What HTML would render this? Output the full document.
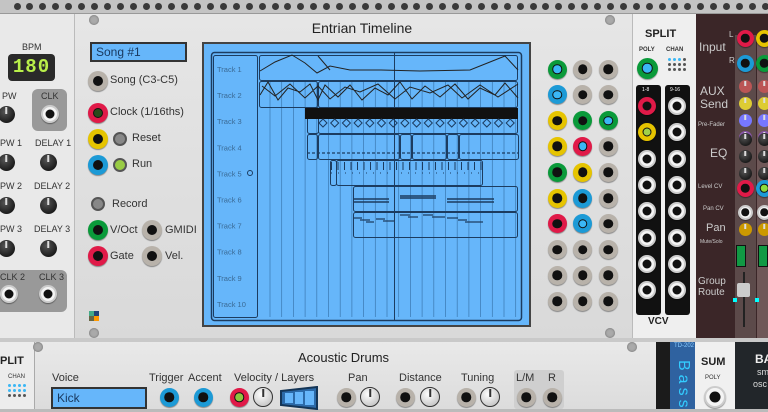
<!DOCTYPE html>
<html><head><meta charset="utf-8">
<style>
*{margin:0;padding:0;box-sizing:border-box}
body{width:768px;height:409px;overflow:hidden;position:relative;background:#bbb;font-family:"Liberation Sans",sans-serif}
.a{position:absolute}
.t{position:absolute;white-space:nowrap;color:#333}
.j{position:absolute;border-radius:50%}
.j i{position:absolute;border-radius:50%;background:#111;left:50%;top:50%;transform:translate(-50%,-50%)}
.k{position:absolute;border-radius:50%;background:radial-gradient(circle at 40% 35%,#555,#1c1c1c 70%);}
.k:after{content:"";position:absolute;left:50%;top:8%;width:1.5px;height:40%;background:#ddd;transform:translateX(-50%)}
.kw{border:1.5px solid #333}
.kw:after{background:#333}
.dot{position:absolute;width:7px;height:7px;border-radius:50%;background:#3a3a3a;top:3px}
</style></head><body>
<div class="a" style="left:0;top:0;width:768px;height:14px;background:#c4c4c4;border-bottom:1px solid #999" id="rail"></div>
<div class="a" style="left:0;top:14px;width:75px;height:324px;background:#e9e9e9;border-right:1px solid #bbb"></div>
<div class="a" style="left:75px;top:14px;width:557px;height:324px;background:linear-gradient(180deg,#e6e6e6,#d9d9d9)"></div>
<div class="a" style="left:632px;top:14px;width:64px;height:324px;background:#efefef;border-left:1px solid #bbb"></div>
<div class="a" style="left:696px;top:14px;width:72px;height:324px;background:#3b2628"></div>
<div class="a" style="left:735px;top:35px;width:21px;height:303px;background:#5c4a4a"></div>
<div class="a" style="left:757px;top:35px;width:11px;height:303px;background:#6f5858"></div>
<div class="a" style="left:0;top:338px;width:768px;height:4px;background:#c9c9c9"></div>
<div class="a" style="left:0;top:342px;width:35px;height:67px;background:#ececec;border-right:1px solid #aaa"></div>
<div class="a" style="left:35px;top:342px;width:621px;height:67px;background:linear-gradient(180deg,#e9e9e9,#dcdcdc)"></div>
<div class="a" style="left:656px;top:342px;width:14px;height:67px;background:#1b1b1b"></div>
<div class="a" style="left:670px;top:342px;width:25px;height:67px;background:#2f62a0"></div>
<div class="a" style="left:695px;top:342px;width:40px;height:67px;background:#f0f0f0"></div>
<div class="a" style="left:735px;top:342px;width:33px;height:67px;background:#22262a"></div>

<div class="t" style="left:272px;top:20px;font-size:14px;color:#222;width:180px;text-align:center">Entrian Timeline</div>

<div class="t" style="left:22px;top:42px;font-size:9px">BPM</div>
<div class="a" style="left:8px;top:54px;width:47px;height:27px;background:#2a2a2a;border-radius:4px;color:#b9f04a;font:bold 19px 'Liberation Mono',monospace;text-align:center;line-height:27px;letter-spacing:1px">180</div>
<div class="a" style="left:32px;top:89px;width:35px;height:42px;background:#999;border-radius:6px"></div>
<div class="t" style="left:41px;top:91px;font-size:9px">CLK</div>
<div class="t" style="left:2px;top:91px;font-size:9px">PW</div>
<div class="t" style="left:0px;top:138px;font-size:9px">PW 1</div>
<div class="t" style="left:35px;top:138px;font-size:9px">DELAY 1</div>
<div class="t" style="left:0px;top:181px;font-size:9px">PW 2</div>
<div class="t" style="left:34px;top:181px;font-size:9px">DELAY 2</div>
<div class="t" style="left:0px;top:224px;font-size:9px">PW 3</div>
<div class="t" style="left:34px;top:224px;font-size:9px">DELAY 3</div>
<div class="a" style="left:0;top:270px;width:67px;height:42px;background:#999;border-radius:0 6px 6px 0"></div>
<div class="t" style="left:0px;top:272px;font-size:9px">CLK 2</div>
<div class="t" style="left:39px;top:272px;font-size:9px">CLK 3</div>

<div class="a" style="left:90px;top:42px;width:97px;height:20px;background:#66b6fa;border:2px solid #333;font:12px 'Liberation Sans';color:#1a3a60;padding-left:4px;line-height:16px">Song #1</div>
<div class="t" style="left:110px;top:74px;font-size:11px">Song (C3-C5)</div>
<div class="t" style="left:110px;top:106px;font-size:11px">Clock (1/16ths)</div>
<div class="t" style="left:132px;top:132px;font-size:11px">Reset</div>
<div class="t" style="left:132px;top:158px;font-size:11px">Run</div>
<div class="t" style="left:112px;top:198px;font-size:11px">Record</div>
<div class="t" style="left:110px;top:224px;font-size:11px">V/Oct</div>
<div class="t" style="left:165px;top:224px;font-size:11px">GMIDI</div>
<div class="t" style="left:110px;top:250px;font-size:11px">Gate</div>
<div class="t" style="left:165px;top:250px;font-size:11px">Vel.</div>
<div class="a" style="left:89px;top:311px;width:5px;height:5px;background:#4a8"></div>
<div class="a" style="left:94px;top:311px;width:5px;height:5px;background:#247"></div>
<div class="a" style="left:94px;top:316px;width:5px;height:5px;background:#f90"></div>
<div class="a" style="left:89px;top:316px;width:5px;height:5px;background:#664"></div>

<div class="a" style="left:202px;top:42px;width:329px;height:285px;background:#66b6fa;border:2px solid #444"></div>
<svg class="a" style="left:0;top:0" width="768" height="409">
<g fill="none" stroke="#1c3c60" stroke-width="1">
<rect x="211.5" y="52.5" width="310" height="268" rx="3" stroke-width="1.5"/>
<rect x="213.5" y="55.5" width="44" height="262" rx="2"/>
<g stroke="#3a78b0" stroke-width="0.7" id="grid"></g>
<line x1="394.5" y1="53" x2="394.5" y2="320" stroke="#1c3c60"/>
<rect x="259.5" y="55.5" width="258" height="25" rx="2"/>
<path d="M260 71 L275 62 L292 55 L305 63 L317 73 L330 66 L350 70 L380 70 L420 71 L470 70 L490 62 L505 56 L518 70" stroke="#222"/>
<path d="M318 56 L330 70" stroke="#222"/>
<rect x="259.5" y="81.5" width="58" height="26" rx="2"/><rect x="318.5" y="81.5" width="199" height="26" rx="2"/>
<path d="M260 95 L268 82 L278 100 L288 88 L300 92 L310 84 L318 100 L325 85 L338 97 L350 85 L362 100 L375 88 L388 95 L400 82 L412 99 L425 86 L440 97 L455 84 L468 99 L480 88 L495 95 L505 83 L518 98 M262 86 L275 96 L290 84 L305 98 L318 86 L330 99 L345 87 L360 92 L378 84 L395 99 L410 87 L430 93 L448 85 L462 98 L480 85 L498 97 L518 84" stroke="#222"/>
<rect x="307.5" y="107.5" width="11" height="26" rx="2"/><rect x="318.5" y="107.5" width="199" height="26" rx="2"/>
<rect x="305" y="108" width="213" height="11" fill="#111" stroke="none"/>
<g id="dia" stroke="#1c3c60"></g>
<rect x="307.5" y="134.5" width="10" height="25" rx="2"/><rect x="318.5" y="134.5" width="81" height="25" rx="2"/><rect x="400.5" y="134.5" width="11" height="25" rx="2"/><rect x="412.5" y="134.5" width="34" height="25" rx="2"/><rect x="447.5" y="134.5" width="11" height="25" rx="2"/><rect x="459.5" y="134.5" width="59" height="25" rx="2"/>
<path d="M307 153 H518" stroke="#1c3c60" stroke-dasharray="3 2" stroke-width="1.2"/>
<rect x="330.5" y="160.5" width="6" height="25" rx="2"/><rect x="336.5" y="160.5" width="146" height="25" rx="2"/>
<path d="M331 166 H483" stroke="#1c3c60" stroke-dasharray="1 5.5" stroke-width="8"/>
<path d="M331 173 H483" stroke="#1c3c60" stroke-dasharray="1 6"/>
<rect x="353.5" y="186.5" width="164" height="25" rx="2"/>
<path d="M353 199 H389 M353 202 H389 M400 196 H436 M400 198 H436 M447 199 H494 M447 202 H494" stroke="#1c3c60" stroke-width="1.5"/>
<rect x="353.5" y="212.5" width="164" height="25" rx="2"/>
<path d="M353 218 H362 M360 220 H370 M366 222 H374 M376 219 H385 M383 221 H395 M400 215 H410 M408 217 H418 M423 215 H433 M432 217 H445 M447 218 H458 M458 220 H467 M465 222 H483" stroke="#1c3c60" stroke-width="1.3"/>
<circle cx="250" cy="173" r="2.5" stroke="#1c3c60"/>
</g>
<g font-family="Liberation Sans" font-size="7.5" fill="#3a6a95" id="tl"></g>
</svg>

<div class="t" style="left:645px;top:28px;font-size:11px;font-weight:bold;color:#222">SPLIT</div>
<div class="t" style="left:639px;top:47px;font-size:6px;font-weight:bold">POLY</div>
<div class="t" style="left:666px;top:47px;font-size:6px;font-weight:bold">CHAN</div>
<div class="a" style="left:636px;top:85px;width:25px;height:230px;background:#111;border-radius:3px"></div>
<div class="a" style="left:665px;top:85px;width:25px;height:230px;background:#111;border-radius:3px"></div>
<div class="t" style="left:642px;top:87px;font-size:5px;color:#fff">1-8</div>
<div class="t" style="left:670px;top:87px;font-size:5px;color:#fff">9-16</div>
<div class="t" style="left:648px;top:316px;font-size:10px;font-weight:bold;color:#222">VCV</div>

<div class="t" style="left:699px;top:40px;font-size:12px;color:#ccc">Input</div>
<div class="t" style="left:729px;top:30px;font-size:8px;color:#ccc">L</div>
<div class="t" style="left:729px;top:56px;font-size:8px;color:#ccc">R</div>
<div class="t" style="left:700px;top:85px;font-size:12px;color:#ccc;line-height:13px">AUX<br>Send</div>
<div class="t" style="left:698px;top:122px;font-size:6px;color:#ccc">Pre-Fader</div>
<div class="t" style="left:710px;top:146px;font-size:12px;color:#ccc">EQ</div>
<div class="t" style="left:698px;top:184px;font-size:6px;color:#ccc">Level CV</div>
<div class="t" style="left:703px;top:206px;font-size:6px;color:#ccc">Pan CV</div>
<div class="t" style="left:706px;top:222px;font-size:11px;color:#ccc">Pan</div>
<div class="t" style="left:700px;top:239px;font-size:5px;color:#ccc">Mute/Solo</div>
<div class="t" style="left:698px;top:276px;font-size:10px;color:#ccc;line-height:11px">Group<br>Route</div>
<div class="a" style="left:736px;top:245px;width:10px;height:22px;background:#194;border:1px solid #111"></div>
<div class="a" style="left:758px;top:245px;width:10px;height:22px;background:#194;border:1px solid #111"></div>
<div class="a" style="left:743px;top:272px;width:2px;height:55px;background:#222"></div>
<div class="a" style="left:737px;top:283px;width:13px;height:14px;background:#ccc;border-radius:2px"></div>
<div class="a" style="left:733px;top:298px;width:4px;height:4px;background:#0ff"></div>
<div class="a" style="left:755px;top:298px;width:4px;height:4px;background:#0ff"></div>

<div class="t" style="left:0px;top:355px;font-size:11px;font-weight:bold;color:#222">PLIT</div>
<div class="t" style="left:8px;top:374px;font-size:6px">CHAN</div>
<div class="t" style="left:298px;top:350px;font-size:13px;color:#222">Acoustic Drums</div>
<div class="t" style="left:52px;top:372px;font-size:11px">Voice</div>
<div class="t" style="left:149px;top:372px;font-size:11px">Trigger</div>
<div class="t" style="left:188px;top:372px;font-size:11px">Accent</div>
<div class="t" style="left:234px;top:372px;font-size:11px">Velocity / Layers</div>
<div class="t" style="left:348px;top:372px;font-size:11px">Pan</div>
<div class="t" style="left:399px;top:372px;font-size:11px">Distance</div>
<div class="t" style="left:461px;top:372px;font-size:11px">Tuning</div>
<div class="a" style="left:514px;top:370px;width:50px;height:39px;background:#cfcfcf;border-radius:3px"></div>
<div class="t" style="left:516px;top:372px;font-size:11px">L/M</div>
<div class="t" style="left:548px;top:372px;font-size:11px">R</div>
<div class="a" style="left:51px;top:387px;width:96px;height:22px;background:#66b6fa;border:2px solid #333;font-size:12px;color:#1a3a60;padding-left:4px;line-height:18px">Kick</div>
<svg class="a" style="left:280px;top:386px" width="40" height="24"><path d="M1 5 L37 1 L37 23 L1 19Z" fill="#2c6aa8" stroke="#143556" stroke-width="2"/><rect x="5" y="7" width="8" height="10" fill="#66b6fa"/><rect x="15" y="6" width="8" height="12" fill="#66b6fa"/><rect x="25" y="5" width="9" height="14" fill="#66b6fa"/></svg>
<div class="t" style="left:674px;top:343px;font-size:6px;color:#8cf">TD-202</div>
<div class="t" style="font-size:16px;color:#3cf;transform:rotate(90deg);transform-origin:left top;left:692px;top:360px;letter-spacing:4px">Bass</div>
<div class="t" style="left:701px;top:356px;font-size:11px;font-weight:bold;color:#222">SUM</div>
<div class="t" style="left:705px;top:375px;font-size:6px">POLY</div>
<div class="t" style="left:755px;top:352px;font-size:12px;font-weight:bold;color:#eee">BA</div>
<div class="t" style="left:757px;top:367px;font-size:9px;color:#ddd">sm</div>
<div class="t" style="left:753px;top:379px;font-size:9px;color:#ddd">osc</div>
<div id="z"></div>
<script>
var z=document.getElementById('z'),h='';
var r=document.getElementById('rail');
for(var x=17;x<768;x+=12.9)h+='<div class="dot" style="left:'+(x-3.5)+'px"></div>';
r.innerHTML=h;h='';
var C={g:['#b8b2aa','#111'],G:['#0a9a3a','#111'],Gb:['#0a9a3a','#3bb7f5'],B:['#1c9ad6','#111'],Bb:['#1c9ad6','#3bb7f5'],Y:['#e6c400','#111'],R:['#e01a48','#111'],Rb:['#e01a48','#3bb7f5'],Rg:['#e01a48','#2a4a1a'],W:['#f4f4f4','#111'],Yg:['#e6c400','#a0d04a'],Rl:['#e01a48','#8cc63f'],Bl:['#1c9ad6','#8cdc3c']};
function J(x,y,c,s){s=s||20;var q=C[c];h+='<div class="j" style="left:'+(x-s/2)+'px;top:'+(y-s/2)+'px;width:'+s+'px;height:'+s+'px;background:'+q[0]+';box-shadow:0 1px 1px rgba(0,0,0,.4)'+(c=='W'?';border:2px solid #ccc':'')+'"><i style="width:'+(s*.5)+'px;height:'+(s*.5)+'px;background:'+q[1]+';border:'+(q[1]!='#111'?'1.5px solid #111':'0')+'"></i></div>';}
function K(x,y,s,bg){h+='<div class="k'+(bg&&bg.indexOf('#fff')>0?' kw':'')+'" style="left:'+(x-s/2)+'px;top:'+(y-s/2)+'px;width:'+s+'px;height:'+s+'px'+(bg?';background:'+bg:'')+'"></div>';}
function B(x,y,c){h+='<div class="a" style="left:'+(x-7)+'px;top:'+(y-7)+'px;width:14px;height:14px;border-radius:50%;background:'+c+';border:2px solid #555"></div>';}
function S(x,y){h+='<div class="a" style="left:'+(x-5)+'px;top:'+(y-5)+'px;width:10px;height:10px;border-radius:50%;background:#aaa;box-shadow:inset 0 0 2px #666"></div>';}
J(50,114,'W',18);K(6,114,17);K(6,162,17);K(48,162,17);K(6,205,17);K(48,205,17);K(6,248,17);K(48,248,17);
J(9,294,'W',18);J(48,294,'W',18);
J(98,81,'g');J(98,113,'Rg');J(98,139,'Y');J(98,165,'B');B(120,139,'#888');B(120,165,'#9c4');B(98,204,'#888');
J(98,230,'G');J(98,256,'R');J(152,230,'g');J(152,256,'g');
var cols=[['Gb','g','g'],['Bb','g','g'],['Y','G','Gb'],['Y','Rb','g'],['G','Y','g'],['Y','B','g'],['R','Bb','g'],['g','g','g'],['g','g','g'],['g','g','g']];
for(var i=0;i<10;i++)for(var k=0;k<3;k++)J(557+k*25.5,69+i*25.8,cols[i][k],19);
S(94,20);S(94,333);S(610,20);S(610,333);S(38,347);S(632,347);
J(647,68,'Gb',21);
for(var a=0;a<3;a++)for(var b=0;b<4;b++)h+='<div class="a" style="left:'+(668+b*5)+'px;top:'+(58+a*5)+'px;width:3px;height:3px;border-radius:50%;background:'+(a==0&&b<3?'#3bb7f5':'#555')+'"></div>';
for(var a=0;a<3;a++)for(var b=0;b<4;b++)h+='<div class="a" style="left:'+(8+b*5)+'px;top:'+(384+a*5)+'px;width:3px;height:3px;border-radius:50%;background:'+(a<2?'#3bb7f5':'#555')+'"></div>';
for(var i=0;i<8;i++){J(647,106+i*26.3,i==0?'R':i==1?'Yg':'W',18);J(677,106+i*26.3,'W',18);}
J(745,38,'R',17);J(764,38,'Y',17);J(745,63,'B',17);J(764,63,'G',17);
var kc=['#b55','#dc3','#77f','#85a'];for(var i=0;i<4;i++){K(745,86+i*17,13,kc[i]);K(764,86+i*17,13,kc[i]);}
for(var i=0;i<3;i++){K(745,139+i*17,13);K(764,139+i*17,13);}
J(745,188,'R',17);J(764,188,'Bl',17);J(745,212,'W',15);J(764,212,'W',15);K(745,229,13,'#c90');K(764,229,13,'#c90');
var wk='radial-gradient(circle at 40% 35%,#fff,#ccc 70%)';
J(169,397,'B',19);J(203,397,'B',19);J(239,397,'Rl',19);K(263,397,20,wk);
J(346,397,'g',19);K(370,397,20,wk);
J(405,397,'g',19);K(430,397,20,wk);
J(466,397,'g',19);K(490,397,20,wk);
J(526,397,'g',19);J(552,397,'g',19);J(715,397,'W',22);
z.innerHTML=h;
var g='';for(var x=270;x<518;x+=11.7)g+='<line x1="'+x+'" y1="81" x2="'+x+'" y2="317"/>';
document.getElementById('grid').innerHTML=g;
var d='';for(var x=323;x<518;x+=11.7)d+='<path d="M'+(x-4)+' 123 L'+x+' 119 L'+(x+4)+' 123 L'+x+' 127Z"/>';
document.getElementById('dia').innerHTML=d;
var t='';for(var i=0;i<10;i++)t+='<text x="217" y="'+(72+i*26.1)+'">Track '+(i+1)+'</text>';
document.getElementById('tl').innerHTML=t;
</script>
</body></html>
